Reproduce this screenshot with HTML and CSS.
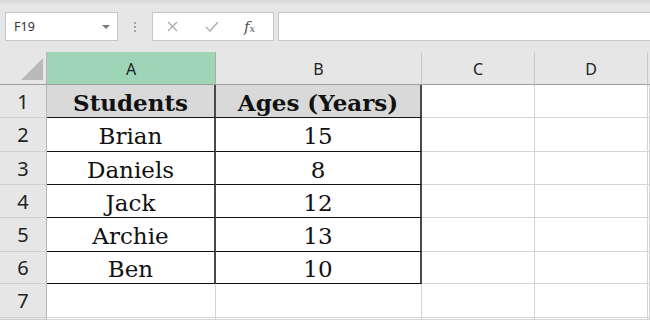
FILE: index.html
```html
<!DOCTYPE html>
<html>
<head>
<meta charset="utf-8">
<link rel="stylesheet" href="styles.css">
</head>
<body>
<div class="app">
  <div class="toolbar">
    <div class="namebox"><span class="nb-text">F19</span><span class="caret"></span></div>
    <div class="grip"><i></i><i></i><i></i></div>
    <div class="fbtns">
      <svg class="ic-x" width="11" height="11" viewBox="0 0 11 11"><path d="M1 1L10 10M10 1L1 10" stroke="#a9a9a9" stroke-width="1.3" fill="none"/></svg>
      <svg class="ic-ok" width="14" height="11" viewBox="0 0 14 11"><path d="M1 6L5 10L13 1" stroke="#b3b3b3" stroke-width="1.6" fill="none"/></svg>
      <span class="fx">f<span class="fx-x">x</span></span>
    </div>
    <div class="finput"></div>
  </div>
  <div class="sheet">
    <div class="corner"><span class="tri"></span></div>
    <div class="ch sel">A</div>
    <div class="ch">B</div>
    <div class="ch">C</div>
    <div class="ch">D</div>
    <div class="ch end"></div>

    <div class="rh">1</div>
    <div class="dc hd a">Students</div>
    <div class="dc hd b">Ages (Years)</div>
    <div class="gc"></div><div class="gc"></div><div class="gc"></div>

    <div class="rh">2</div>
    <div class="dc a">Brian</div>
    <div class="dc b">15</div>
    <div class="gc"></div><div class="gc"></div><div class="gc"></div>

    <div class="rh">3</div>
    <div class="dc a">Daniels</div>
    <div class="dc b">8</div>
    <div class="gc"></div><div class="gc"></div><div class="gc"></div>

    <div class="rh">4</div>
    <div class="dc a">Jack</div>
    <div class="dc b">12</div>
    <div class="gc"></div><div class="gc"></div><div class="gc"></div>

    <div class="rh">5</div>
    <div class="dc a">Archie</div>
    <div class="dc b">13</div>
    <div class="gc"></div><div class="gc"></div><div class="gc"></div>

    <div class="rh">6</div>
    <div class="dc a">Ben</div>
    <div class="dc b">10</div>
    <div class="gc"></div><div class="gc"></div><div class="gc"></div>

    <div class="rh">7</div>
    <div class="gc"></div><div class="gc"></div><div class="gc"></div><div class="gc"></div><div class="gc"></div>

    <div class="rh"></div>
    <div class="gc"></div><div class="gc"></div><div class="gc"></div><div class="gc"></div><div class="gc"></div>
  </div>
</div>
</body>
</html>
```
FILE: styles.css
```css
* { box-sizing: border-box; }
html, body { margin: 0; padding: 0; }
body {
  width: 650px;
  height: 320px;
  overflow: hidden;
  background: #e6e6e6;
  font-family: "Noto Sans", "Open Sans", sans-serif;
}
.app { width: 650px; height: 320px; overflow: hidden; }

.toolbar {
  height: 52px;
  display: flex;
  align-items: flex-start;
  padding: 12px 0 0 5px;
  background: linear-gradient(#d6d6d6 0px, #e2e2e2 3px, #e6e6e6 5px, #e6e6e6 100%);
}
.namebox {
  width: 113px;
  height: 29px;
  background: #fff;
  border: 1px solid #c6c6c6;
  display: flex;
  align-items: center;
  justify-content: space-between;
  padding: 0 7px 0 8px;
}
.nb-text { font-size: 12.5px; color: #333; }
.caret {
  width: 0; height: 0;
  border-left: 4px solid transparent;
  border-right: 4px solid transparent;
  border-top: 4px solid #7a7a7a;
}
.grip {
  width: 34px;
  height: 29px;
  display: flex;
  flex-direction: column;
  align-items: center;
  justify-content: center;
  gap: 2px;
}
.grip i { display: block; width: 2px; height: 2px; background: #a5a5a5; }
.fbtns {
  width: 122px;
  height: 29px;
  background: #fff;
  border: 1px solid #c6c6c6;
  display: flex;
  align-items: center;
  padding-left: 14px;
}
.ic-x { margin-right: 27px; }
.ic-ok { margin-right: 25px; }
.fx {
  font-family: "DejaVu Serif", serif;
  font-style: italic;
  font-size: 15px;
  color: #555;
}
.fx-x { font-size: 10px; }
.finput {
  margin-left: 4px;
  flex: 1;
  height: 29px;
  background: #fff;
  border: 1px solid #c6c6c6;
  border-right: none;
}

.sheet {
  display: grid;
  grid-template-columns: 47px 169px 206px 113px 113px 1fr;
  grid-template-rows: 33px 33px 34px 33px 33px 34px 32px 34px 1fr;
  height: 268px;
}
.sheet > div {
  border-right: 1px solid #d4d4d4;
  border-bottom: 1px solid #d4d4d4;
}
.corner {
  background: #e6e6e6;
  border-right-color: #b8b8b8 !important;
  border-bottom-color: #9e9e9e !important;
  display: flex;
  align-items: flex-end;
  justify-content: flex-end;
  padding: 0 3px 4px 0;
}
.tri {
  width: 0; height: 0;
  border-left: 22px solid transparent;
  border-bottom: 22px solid #b9b9b9;
}
.ch {
  background: #e6e6e6;
  border-right-color: #c8c8c8 !important;
  border-bottom-color: #9e9e9e !important;
  display: flex;
  align-items: center;
  justify-content: center;
  font-size: 16px;
  color: #222;
  padding-top: 2px;
}
.ch.sel { background: #9fd5b7; border-right-color: #ababab !important; }
.ch.end { border-right: none; }
.rh {
  background: #e6e6e6;
  border-right-color: #b8b8b8 !important;
  border-bottom-color: #d0d0d0 !important;
  display: flex;
  align-items: center;
  justify-content: center;
  font-size: 20px;
  color: #222;
}
.gc { background: #fff; }
.dc {
  background: #fff;
  display: flex;
  align-items: center;
  justify-content: center;
  font-family: "DejaVu Serif", serif;
  font-size: 23px;
  color: #111;
  padding-top: 3px;
  border-bottom-color: #111 !important;
}
.dc.a { border-right: 2px solid #4a4a4a !important; }
.dc.b { border-right: 2px solid #4a4a4a !important; }
.dc.hd { background: #d9d9d9; font-weight: bold; }
```
